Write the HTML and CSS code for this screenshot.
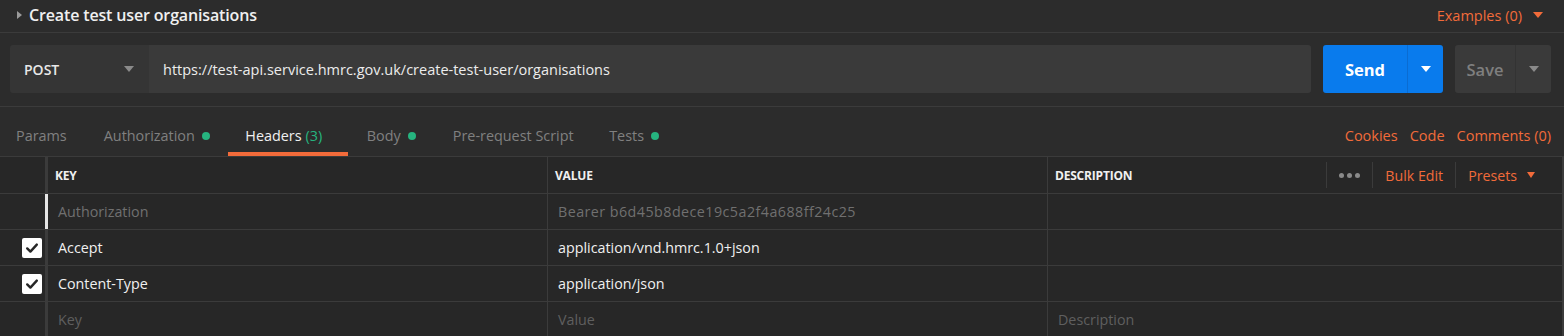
FILE: index.html
```html
<!DOCTYPE html>
<html>
<head>
<meta charset="utf-8">
<link rel="stylesheet" href="styles.css">
</head>
<body>
<div class="app">
  <div class="topbar">
    <div class="title-wrap">
      <span class="tri-right"></span>
      <span class="title">Create test user organisations</span>
    </div>
    <div class="examples">Examples (0) <span class="tri-down orange"></span></div>
  </div>

  <div class="urlrow">
    <div class="urlbox">
      <div class="method">POST <span class="tri-down gray"></span></div>
      <div class="url">https://test-api.service.hmrc.gov.uk/create-test-user/organisations</div>
    </div>
    <div class="send">
      <span class="send-main">Send</span>
      <span class="send-caret"><span class="tri-down white"></span></span>
    </div>
    <div class="save">
      <span class="save-main">Save</span>
      <span class="save-caret"><span class="tri-down gray"></span></span>
    </div>
  </div>

  <div class="tabsrow">
    <div class="tabs">
      <div class="tab first">Params</div>
      <div class="tab">Authorization <span class="dot"></span></div>
      <div class="tab active">Headers <span class="count">(3)</span></div>
      <div class="tab">Body <span class="dot"></span></div>
      <div class="tab pre">Pre-request Script</div>
      <div class="tab">Tests <span class="dot"></span></div>
    </div>
    <div class="links">
      <span>Cookies</span>
      <span>Code</span>
      <span>Comments (0)</span>
    </div>
  </div>

  <div class="table">
    <div class="row head">
      <div class="c-check"></div>
      <div class="c-key">KEY</div>
      <div class="c-val">VALUE</div>
      <div class="c-desc">
        <span>DESCRIPTION</span>
        <div class="tools">
          <span class="sep"></span>
          <span class="dots"><i></i><i></i><i></i></span>
          <span class="sep"></span>
          <span class="tool">Bulk Edit</span>
          <span class="sep"></span>
          <span class="tool">Presets <span class="tri-down orange small"></span></span>
        </div>
      </div>
    </div>
    <div class="row auto">
      <div class="c-check"></div>
      <div class="c-key">Authorization</div>
      <div class="c-val bearer">Bearer b6d45b8dece19c5a2f4a688ff24c25</div>
      <div class="c-desc"></div>
    </div>
    <div class="row">
      <div class="c-check"><span class="cb"><svg viewBox="0 0 20 20" width="20" height="20"><path d="M5.2 10.4 L8.4 13.6 L14.8 6.6" fill="none" stroke="#262626" stroke-width="2.4" stroke-linecap="round" stroke-linejoin="round"/></svg></span></div>
      <div class="c-key">Accept</div>
      <div class="c-val">application/vnd.hmrc.1.0+json</div>
      <div class="c-desc"></div>
    </div>
    <div class="row">
      <div class="c-check"><span class="cb"><svg viewBox="0 0 20 20" width="20" height="20"><path d="M5.2 10.4 L8.4 13.6 L14.8 6.6" fill="none" stroke="#262626" stroke-width="2.4" stroke-linecap="round" stroke-linejoin="round"/></svg></span></div>
      <div class="c-key">Content-Type</div>
      <div class="c-val">application/json</div>
      <div class="c-desc"></div>
    </div>
    <div class="row ph">
      <div class="c-check"></div>
      <div class="c-key">Key</div>
      <div class="c-val">Value</div>
      <div class="c-desc">Description</div>
    </div>
  </div>
</div>
</body>
</html>
```

FILE: styles.css
```css
html, body {
  margin: 0;
  padding: 0;
  background: #2c2c2c;
}
body {
  font-family: "Open Sans", "Noto Sans", sans-serif;
  color: #f0f0f0;
  width: 1564px;
  height: 336px;
  overflow: hidden;
}
.app {
  width: 1564px;
}
.topbar {
  height: 33px;
  border-bottom: 1px solid #3b3b3b;
  display: flex;
  align-items: center;
  justify-content: space-between;
  padding: 0 21px 2px 17px;
  box-sizing: border-box;
}
.title-wrap {
  display: flex;
  align-items: center;
}
.tri-right {
  width: 0;
  height: 0;
  border-top: 4px solid transparent;
  border-bottom: 4px solid transparent;
  border-left: 5px solid #9a9a9a;
  margin-right: 7px;
}
.title {
  font-size: 16px;
  font-weight: 600;
  color: #f0f0f0;
  letter-spacing: -0.15px;
}
.examples {
  font-size: 14.5px;
  color: #f26b3a;
  display: flex;
  align-items: center;
}
.tri-down {
  display: inline-block;
  width: 0;
  height: 0;
  border-left: 5px solid transparent;
  border-right: 5px solid transparent;
  border-top: 6px solid #9a9a9a;
}
.tri-down.orange { border-top-color: #f26b3a; margin-left: 11px; }
.tri-down.gray { border-top-color: #8a8a8a; }
.tri-down.white { border-top-color: #ffffff; }
.tri-down.small {
  border-left-width: 4.5px;
  border-right-width: 4.5px;
  border-top-width: 6px;
  margin-left: 10px;
}
.urlrow {
  display: flex;
  padding: 12px 13px 13px 10px;
  border-bottom: 1px solid #3b3b3b;
  height: 48px;
}
.urlbox {
  flex: 1;
  display: flex;
  border-radius: 3px;
  overflow: hidden;
  height: 48px;
}
.method {
  width: 139px;
  background: #353535;
  display: flex;
  align-items: center;
  justify-content: space-between;
  padding: 0 15px 0 14px;
  box-sizing: border-box;
  font-size: 14px;
  font-weight: 600;
  color: #e8e8e8;
}
.url {
  flex: 1;
  background: #3a3a3a;
  display: flex;
  align-items: center;
  padding-left: 14px;
  font-size: 14.5px;
  color: #ececec;
}
.send {
  width: 120px;
  margin-left: 12px;
  background: #097bed;
  border-radius: 3px;
  display: flex;
  height: 48px;
}
.send-main {
  width: 84px;
  display: flex;
  align-items: center;
  justify-content: center;
  font-size: 16.5px;
  font-weight: 700;
  color: #ffffff;
  border-right: 1px solid #0a6cd2;
}
.send-caret {
  flex: 1;
  display: flex;
  align-items: center;
  justify-content: center;
}
.save {
  width: 96px;
  margin-left: 12px;
  background: #3a3a3a;
  border-radius: 3px;
  display: flex;
  height: 48px;
}
.save-main {
  width: 60px;
  display: flex;
  align-items: center;
  justify-content: center;
  font-size: 16.5px;
  font-weight: 600;
  color: #7f7f7f;
  border-right: 1px solid #333333;
}
.save-caret {
  flex: 1;
  display: flex;
  align-items: center;
  justify-content: center;
}
.tabsrow {
  height: 49px;
  display: flex;
  justify-content: space-between;
  border-bottom: 1px solid #3b3b3b;
}
.tabs {
  display: flex;
}
.tab {
  padding: 8px 18.5px 0 18.5px;
  display: flex;
  align-items: center;
  font-size: 14.4px;
  color: #808080;
  position: relative;
}
.tab.first { padding-left: 16px; }
.tab.pre { padding-right: 17px; }
.tab.active {
  color: #f0f0f0;
  padding-left: 17px;
  padding-right: 26px;
}
.tab.active::after {
  content: "";
  position: absolute;
  left: 0;
  right: 0;
  bottom: 0;
  height: 4px;
  background: #f26b3a;
}
.count {
  color: #26b47f;
  margin-left: 4px;
}
.dot {
  display: inline-block;
  width: 8px;
  height: 8px;
  border-radius: 50%;
  background: #26b47f;
  margin-left: 7px;
  margin-top: 1px;
}
.links {
  display: flex;
  align-items: center;
  gap: 12px;
  padding-right: 13px;
  padding-top: 8px;
  font-size: 14.5px;
  color: #f26b3a;
}
.table {
  background: #272727;
  border-right: 2px solid #3b3b3b;
  width: 1562px;
}
.row {
  display: grid;
  grid-template-columns: 48px 499px 500px 1fr;
  height: 35px;
  border-bottom: 1px solid #3b3b3b;
  font-size: 14.3px;
}
.row > div {
  display: flex;
  align-items: center;
  padding-left: 10px;
  box-sizing: border-box;
}
.row > .c-check {
  padding-left: 22px;
  border-right: 3px solid #3b3b3b;
}
.row > .c-val {
  border-left: 1px solid #3b3b3b;
}
.row > .c-desc {
  border-left: 1px solid #3b3b3b;
}
.row.head {
  height: 36px;
  font-size: 12px;
  font-weight: 700;
  color: #f0f0f0;
  letter-spacing: -0.2px;
}
.row.head > div { padding-left: 7px; }
.row.head > .c-desc {
  justify-content: space-between;
  padding-right: 0;
}
.tools {
  display: flex;
  align-items: center;
  height: 100%;
  font-size: 14.2px;
  font-weight: 400;
  letter-spacing: 0;
  color: #f26b3a;
}
.tools .sep {
  width: 1px;
  height: 26px;
  background: #3b3b3b;
}
.tools .dots {
  display: flex;
  gap: 3px;
  padding: 0 12px 0 12px;
}
.tools .dots i {
  width: 5px;
  height: 5px;
  border-radius: 50%;
  background: #8a8a8a;
  display: block;
}
.tools .tool {
  padding: 0 12px 0 12px;
  display: flex;
  align-items: center;
}
.tools .tool:last-child { padding-right: 27px; }
.row.auto > div { color: #707070; }
.row.auto > .bearer { letter-spacing: 0.45px; }
.row.auto > .c-check { border-right-color: #e6e6e6; }
.row.ph > div { color: #5f5f5f; }
.row.ph { border-bottom: none; }
.cb {
  width: 20px;
  height: 20px;
  background: #ffffff;
  border-radius: 2px;
  display: flex;
}
```
